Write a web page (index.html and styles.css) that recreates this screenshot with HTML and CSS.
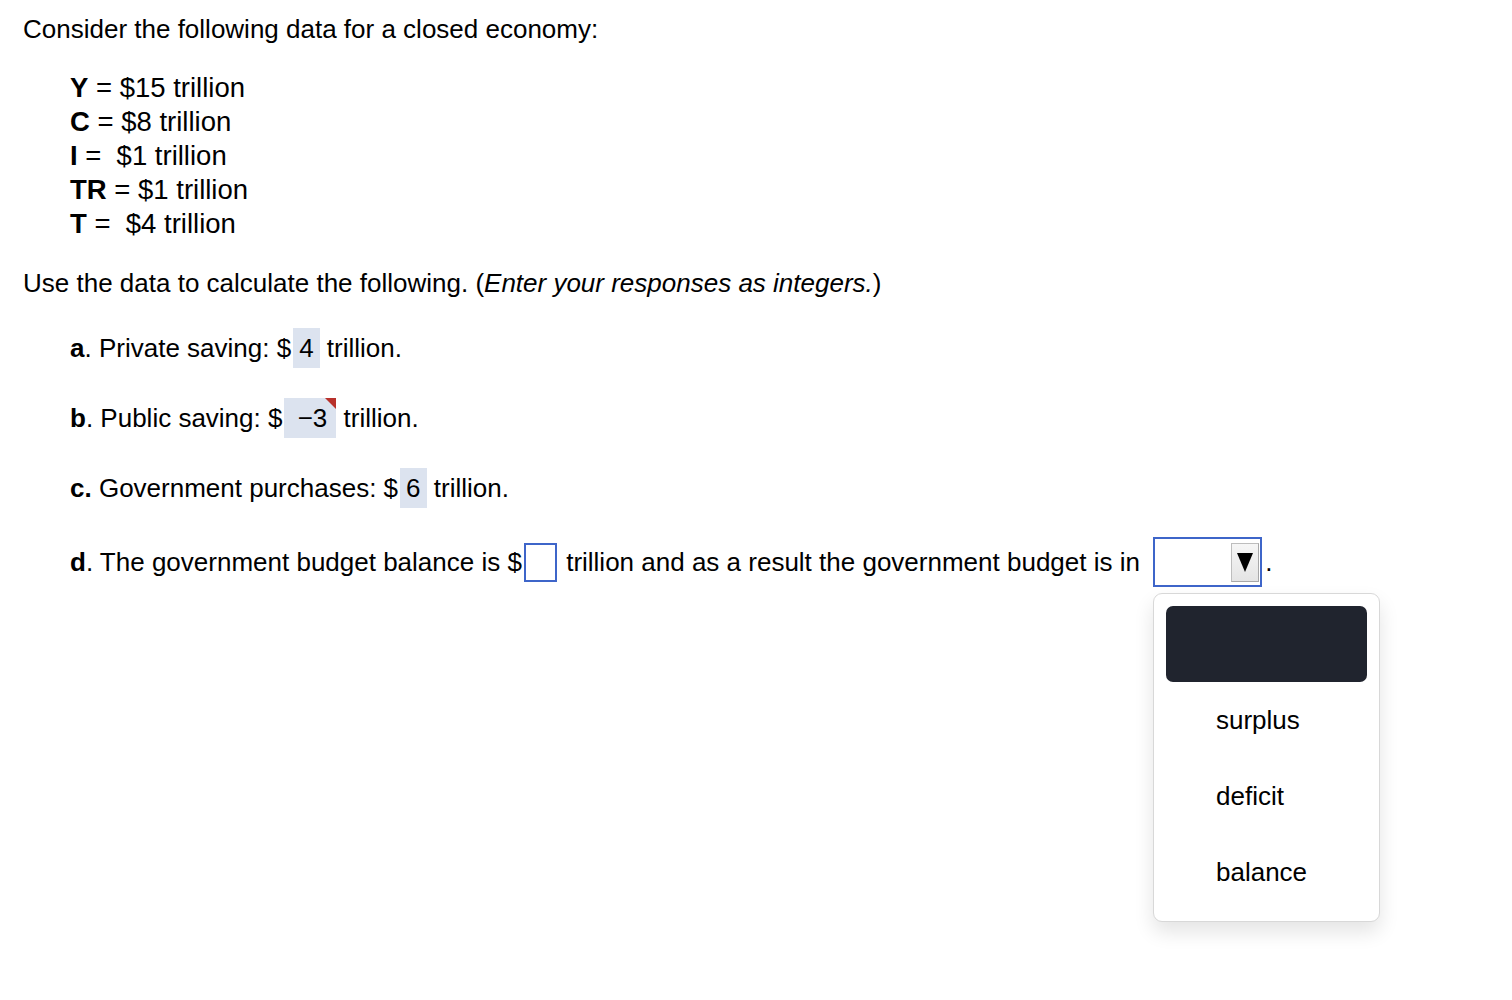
FILE: index.html
```html
<!DOCTYPE html>
<html>
<head>
<meta charset="utf-8">
<link rel="stylesheet" href="styles.css">
</head>
<body>
<div class="page">
  <p class="intro">Consider the following data for a closed economy:</p>
  <div class="data">
    <div><b>Y</b> = $15 trillion</div>
    <div><b>C</b> = $8 trillion</div>
    <div><b>I</b> =&nbsp;&nbsp;$1 trillion</div>
    <div><b>TR</b> = $1 trillion</div>
    <div><b>T</b> =&nbsp;&nbsp;$4 trillion</div>
  </div>
  <p class="use">Use the data to calculate the following. (<i>Enter your responses as integers.</i>)</p>
  <div class="parts">
    <div class="part part-a"><b>a</b>. Private saving: $<span class="ans">4</span> trillion.</div>
    <div class="part"><b>b</b>. Public saving: $<span class="ans ans-wrong">&nbsp;−3</span> trillion.</div>
    <div class="part"><b>c.</b> Government purchases: $<span class="ans">6</span> trillion.</div>
    <div class="part part-d"><b>d</b>. The government budget balance is $<span class="blank"></span> trillion and as a result the government budget is in <span class="select"><span class="arrow-btn"><span class="arrow"></span></span></span><span class="dot">.</span></div>
    <div class="choices">
      <div class="opt opt-current"></div>
      <div class="opt">surplus</div>
      <div class="opt">deficit</div>
      <div class="opt">balance</div>
    </div>
  </div>
</div>
</body>
</html>
```

FILE: styles.css
```css
html, body {
  margin: 0;
  padding: 0;
  background: #ffffff;
}
body {
  font-family: "Liberation Sans", Arial, sans-serif;
  font-size: 26px;
  color: #000000;
}
.page {
  padding: 12px 0 78px 23px;
}
p {
  margin: 0;
}
.intro {
  line-height: 34px;
}
.data {
  margin-top: 25px;
  padding-left: 47px;
  line-height: 34px;
  font-size: 27.5px;
}
.use {
  margin-top: 25px;
  line-height: 34px;
}
.parts {
  padding-left: 47px;
}
.part {
  line-height: 40px;
  margin-top: 30px;
  white-space: nowrap;
}
.part-a {
  margin-top: 28px;
}
.ans {
  display: inline-block;
  position: relative;
  line-height: 40px;
  background: #dce3ef;
  padding: 0 6px;
  margin-left: 2px;
}
.ans-wrong {
  padding-right: 9px;
}
.ans-wrong::after {
  content: "";
  position: absolute;
  top: 0;
  right: 0;
  border-top: 11px solid #b8312b;
  border-left: 11px solid transparent;
}
.part-d {
  margin-top: 29px;
  line-height: 50px;
}
.blank {
  display: inline-block;
  box-sizing: border-box;
  width: 33px;
  height: 39px;
  border: 2px solid #3e65c9;
  margin: 6px 2px 0 2px;
  vertical-align: top;
}
.select {
  box-sizing: border-box;
  display: inline-flex;
  justify-content: flex-end;
  align-items: center;
  vertical-align: top;
  width: 109px;
  height: 50px;
  margin-left: 6px;
  border: 2px solid #3e65c9;
  padding-right: 1px;
  background: #ffffff;
}
.arrow-btn {
  box-sizing: border-box;
  width: 28px;
  height: 39px;
  display: flex;
  align-items: center;
  justify-content: center;
  background: linear-gradient(#f6f6f6, #e4e4e4);
  border: 1px solid #bdbdbd;
  border-right-color: #a8a8a8;
  border-bottom-color: #a8a8a8;
}
.arrow {
  width: 0;
  height: 0;
  border-left: 8px solid transparent;
  border-right: 8px solid transparent;
  border-top: 19px solid #000000;
}
.dot {
  margin-left: 3px;
}
.choices {
  box-sizing: border-box;
  width: 227px;
  margin: 6px 0 0 1083px;
  display: flex;
  flex-direction: column;
  padding: 12px 12px 11px 12px;
  background: #ffffff;
  border: 1px solid #d8d8d8;
  border-radius: 9px;
  box-shadow: 0 10px 20px rgba(0, 0, 0, 0.11);
}
.opt {
  display: flex;
  align-items: center;
  height: 76px;
  padding-left: 50px;
  font-size: 26px;
  line-height: 30px;
}
.opt-current {
  background: #20242e;
  border-radius: 7px;
}
```
